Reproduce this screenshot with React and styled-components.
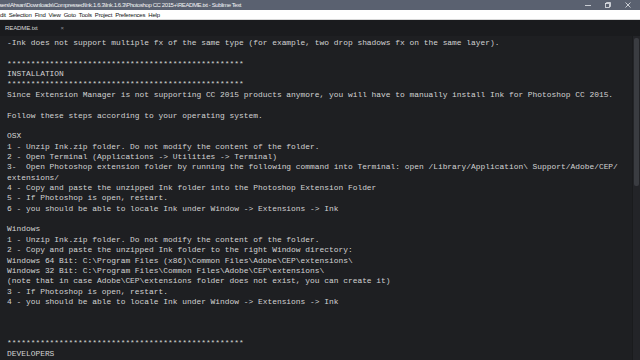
import React from 'react';
import styled, { createGlobalStyle } from 'styled-components';

const GlobalStyle = createGlobalStyle`
    html, body {
        margin: 0;
        padding: 0;
        background-color: #1e1f22;
    }
`;

const STARS = '*'.repeat(50);

const lines = [
    '-Ink does not support multiple fx of the same type (for example, two drop shadows fx on the same layer).',
    '',
    STARS,
    'INSTALLATION',
    STARS,
    'Since Extension Manager is not supporting CC 2015 products anymore, you will have to manually install Ink for Photoshop CC 2015.',
    '',
    'Follow these steps according to your operating system.',
    '',
    'OSX',
    '1 - Unzip Ink.zip folder. Do not modify the content of the folder.',
    '2 - Open Terminal (Applications -> Utilities -> Terminal)',
    '3-  Open Photoshop extension folder by running the following command into Terminal: open /Library/Application\\ Support/Adobe/CEP/',
    'extensions/',
    '4 - Copy and paste the unzipped Ink folder into the Photoshop Extension Folder',
    '5 - If Photoshop is open, restart.',
    '6 - you should be able to locale Ink under Window -> Extensions -> Ink',
    '',
    'Windows',
    '1 - Unzip Ink.zip folder. Do not modify the content of the folder.',
    '2 - Copy and paste the unzipped Ink folder to the right Window directory:',
    'Windows 64 Bit: C:\\Program Files (x86)\\Common Files\\Adobe\\CEP\\extensions\\',
    'Windows 32 Bit: C:\\Program Files\\Common Files\\Adobe\\CEP\\extensions\\',
    '(note that in case Adobe\\CEP\\extensions folder does not exist, you can create it)',
    '3 - If Photoshop is open, restart.',
    '4 - you should be able to locale Ink under Window -> Extensions -> Ink',
    '',
    '',
    '',
    STARS,
    'DEVELOPERS',
];

const menus = ['dit', 'Selection', 'Find', 'View', 'Goto', 'Tools', 'Project', 'Preferences', 'Help'];

export default function App() {
    return (
        <>
            <GlobalStyle />
            <Window>
                <TitleBar>
                    <TitleText>sers\Ahsan\Downloads\Compressed\Ink.1.6.3\Ink.1.6.3\Photoshop CC 2015+\README.txt - Sublime Text</TitleText>
                    <WindowControls>
                        <ControlButton>
                            <svg width="8" height="8" viewBox="0 0 8 8"><path d="M1 4.5h6" stroke="#e6e8ec" strokeWidth="0.8" /></svg>
                        </ControlButton>
                        <ControlButton>
                            <svg width="8" height="8" viewBox="0 0 8 8" fill="none" stroke="#e6e8ec" strokeWidth="0.8">
                                <rect x="1.5" y="2.5" width="4" height="4" />
                                <path d="M2.5 2.5V1.5h4v4h-1" />
                            </svg>
                        </ControlButton>
                        <ControlButton>
                            <svg width="8" height="8" viewBox="0 0 8 8"><path d="M1.5 1.5l5 5M6.5 1.5l-5 5" stroke="#e6e8ec" strokeWidth="0.8" /></svg>
                        </ControlButton>
                    </WindowControls>
                </TitleBar>
                <MenuBar>
                    {menus.map((m) => (
                        <MenuItem key={m}>{m}</MenuItem>
                    ))}
                </MenuBar>
                <TabBar>
                    <Tab>
                        <TabLabel>README.txt</TabLabel>
                        <TabClose>×</TabClose>
                    </Tab>
                </TabBar>
                <EditorArea>
                    <Code>
                        {lines.map((line, i) => (
                            <Line key={i}>{line}</Line>
                        ))}
                    </Code>
                    <ScrollTrack>
                        <ScrollThumb />
                    </ScrollTrack>
                </EditorArea>
            </Window>
        </>
    );
}

const Window = styled.div`
    width: 640px;
    height: 360px;
    display: flex;
    flex-direction: column;
    overflow: hidden;
    background-color: #1e1f22;
`;

const TitleBar = styled.div`
    height: 10px;
    flex: none;
    display: flex;
    align-items: center;
    justify-content: space-between;
    background-color: #5a6170;
`;

const TitleText = styled.div`
    font-family: 'Liberation Sans', 'Open Sans', sans-serif;
    font-size: 6px;
    letter-spacing: -0.4px;
    color: #f2f3f5;
    white-space: nowrap;
    margin-left: -1px;
`;

const WindowControls = styled.div`
    display: flex;
    align-items: center;
    gap: 12px;
    margin-right: 8px;
`;

const ControlButton = styled.div`
    width: 8px;
    height: 8px;
    display: flex;
    align-items: center;
    justify-content: center;
`;

const MenuBar = styled.div`
    height: 9px;
    flex: none;
    display: flex;
    align-items: center;
    gap: 3px;
    background-color: #ffffff;
    border-bottom: 1px solid #d8d8d8;
`;

const MenuItem = styled.span`
    font-family: 'Liberation Sans', 'Open Sans', sans-serif;
    font-size: 6px;
    letter-spacing: -0.2px;
    color: #111111;
    white-space: nowrap;
`;

const TabBar = styled.div`
    height: 16px;
    flex: none;
    display: flex;
    align-items: center;
    background-color: #1a1b1e;
`;

const Tab = styled.div`
    width: 68px;
    display: flex;
    align-items: center;
    justify-content: space-between;
    padding: 0 4px 0 5px;
    box-sizing: border-box;
`;

const TabLabel = styled.span`
    font-family: 'Liberation Sans', 'Open Sans', sans-serif;
    font-size: 6px;
    letter-spacing: -0.1px;
    color: #d8d8d8;
`;

const TabClose = styled.span`
    font-family: 'Liberation Sans', sans-serif;
    font-size: 6px;
    color: #8a8c90;
`;

const EditorArea = styled.div`
    flex: 1;
    display: flex;
    min-height: 0;
`;

const Code = styled.div`
    flex: 1;
    padding: 2px 0 0 7px;
    font-family: 'Liberation Mono', 'DejaVu Sans Mono', monospace;
    font-size: 7.9px;
    line-height: 10.37px;
    color: #d2d2d2;
    overflow: hidden;
`;

const Line = styled.div`
    height: 10.37px;
    white-space: pre;
`;

const ScrollTrack = styled.div`
    width: 7px;
    flex: none;
    background-color: #232428;
    border-left: 1px solid #1a1b1d;
`;

const ScrollThumb = styled.div`
    width: 5px;
    height: 148px;
    margin: 2px auto 0;
    border-radius: 2px;
    background-color: #3a3c41;
`;
